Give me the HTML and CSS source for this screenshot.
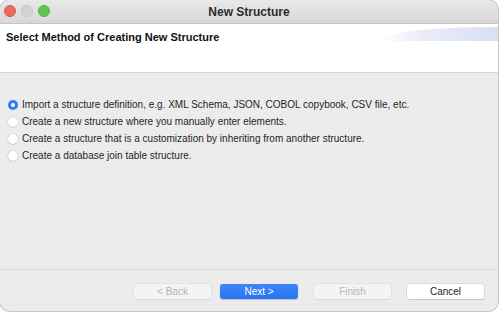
FILE: index.html
```html
<!DOCTYPE html>
<html>
<head>
<meta charset="utf-8">
<link rel="stylesheet" href="styles.css">
</head>
<body>
<div class="window">
  <div class="titlebar">
    <div class="lights">
      <span class="light red"></span>
      <span class="light gray"></span>
      <span class="light green"></span>
    </div>
    <div class="title">New Structure</div>
  </div>
  <div class="header">
    <div class="header-title">Select Method of Creating New Structure</div>
    <div class="banner"></div>
  </div>
  <div class="body">
    <div class="options">
      <label class="option"><span class="radio checked"></span><span>Import a structure definition, e.g. XML Schema, JSON, COBOL copybook, CSV file, etc.</span></label>
      <label class="option"><span class="radio"></span><span>Create a new structure where you manually enter elements.</span></label>
      <label class="option"><span class="radio"></span><span>Create a structure that is a customization by inheriting from another structure.</span></label>
      <label class="option"><span class="radio"></span><span>Create a database join table structure.</span></label>
    </div>
  </div>
  <div class="footer">
    <div class="nav-group">
      <button class="btn disabled">&lt; Back</button>
      <button class="btn primary">Next &gt;</button>
    </div>
    <button class="btn disabled">Finish</button>
    <button class="btn">Cancel</button>
  </div>
</div>
</body>
</html>
```
FILE: styles.css
```css
* { box-sizing: border-box; }
html, body { margin: 0; padding: 0; background: #ffffff; }
body {
  width: 500px;
  height: 312px;
  overflow: hidden;
  font-family: "Liberation Sans", Arial, sans-serif;
  color: #262626;
}
.window {
  width: 498px;
  height: 311px;
  border-radius: 10px;
  overflow: hidden;
  background: #ececec;
  display: flex;
  flex-direction: column;
  box-shadow: 0 0 0 1px #c8c8c8;
}
.titlebar {
  height: 24px;
  flex: none;
  background: linear-gradient(#e9e9e9, #d7d7d7);
  border-bottom: 1px solid #c4c4c4;
  position: relative;
  display: flex;
  align-items: center;
  justify-content: center;
}
.lights {
  position: absolute;
  left: 4px;
  top: 5px;
  display: flex;
  gap: 5px;
}
.light {
  width: 12px;
  height: 12px;
  border-radius: 50%;
  display: block;
}
.light.red { background: #ed6a5e; border: 0.5px solid #d8574b; }
.light.gray { background: #d3d3d3; border: 0.5px solid #c4c4c4; }
.light.green { background: #61c554; border: 0.5px solid #52b044; }
.title {
  font-weight: bold;
  font-size: 12px;
  color: #2c2c2c;
}
.header {
  height: 49px;
  flex: none;
  background: #ffffff;
  border-bottom: 1px solid #d6d6d6;
  position: relative;
  padding: 7px 0 0 6px;
}
.header-title {
  font-weight: bold;
  font-size: 11px;
  color: #111;
}
.banner {
  position: absolute;
  right: 0;
  top: 3px;
  width: 120px;
  height: 14px;
  border-radius: 100% 0 0 0 / 100% 0 0 0;
  background: linear-gradient(90deg, rgba(225,230,248,0) 0%, #e9ecf8 40%, #d9def4 100%);
}
.body {
  flex: 1;
  padding: 25px 0 0 8px;
}
.options {
  display: flex;
  flex-direction: column;
  gap: 3.5px;
}
.option {
  display: flex;
  align-items: center;
  gap: 4px;
  font-size: 10px;
  height: 13.5px;
  color: #1f1f1f;
}
.radio {
  width: 10px;
  height: 10px;
  border-radius: 50%;
  background: #fff;
  box-shadow: 0 0 0 0.5px #c6c6c6, 0 0.5px 1px rgba(0,0,0,0.15);
  flex: none;
  position: relative;
}
.radio.checked {
  background: #2f7bf5;
  box-shadow: none;
}
.radio.checked::after {
  content: "";
  position: absolute;
  left: 3px;
  top: 3px;
  width: 4px;
  height: 4px;
  border-radius: 50%;
  background: #fff;
}
.footer {
  height: 42px;
  flex: none;
  border-top: 1px solid #d9d9d9;
  display: flex;
  justify-content: flex-end;
  align-items: flex-start;
  gap: 16px;
  padding: 14px 14px 0 0;
}
.nav-group {
  display: flex;
  gap: 9px;
}
.btn {
  width: 77px;
  height: 15px;
  border-radius: 3px;
  font-family: "Liberation Sans", Arial, sans-serif;
  font-size: 10px;
  padding: 0;
  border: none;
  background: #ffffff;
  color: #222;
  box-shadow: 0 0 0 0.5px #cfcfcf, 0 0.5px 1px rgba(0,0,0,0.2);
}
.btn.primary, .btn.wide { width: 78px; }
.btn.disabled {
  background: #f4f4f4;
  color: #b6b6b6;
  box-shadow: 0 0 0 0.5px #dcdcdc, 0 0.5px 1px rgba(0,0,0,0.08);
}
.btn.primary {
  background: linear-gradient(#3d86f7, #2a74f3);
  color: #fff;
  box-shadow: 0 0.5px 1px rgba(0,0,0,0.2);
}
```
